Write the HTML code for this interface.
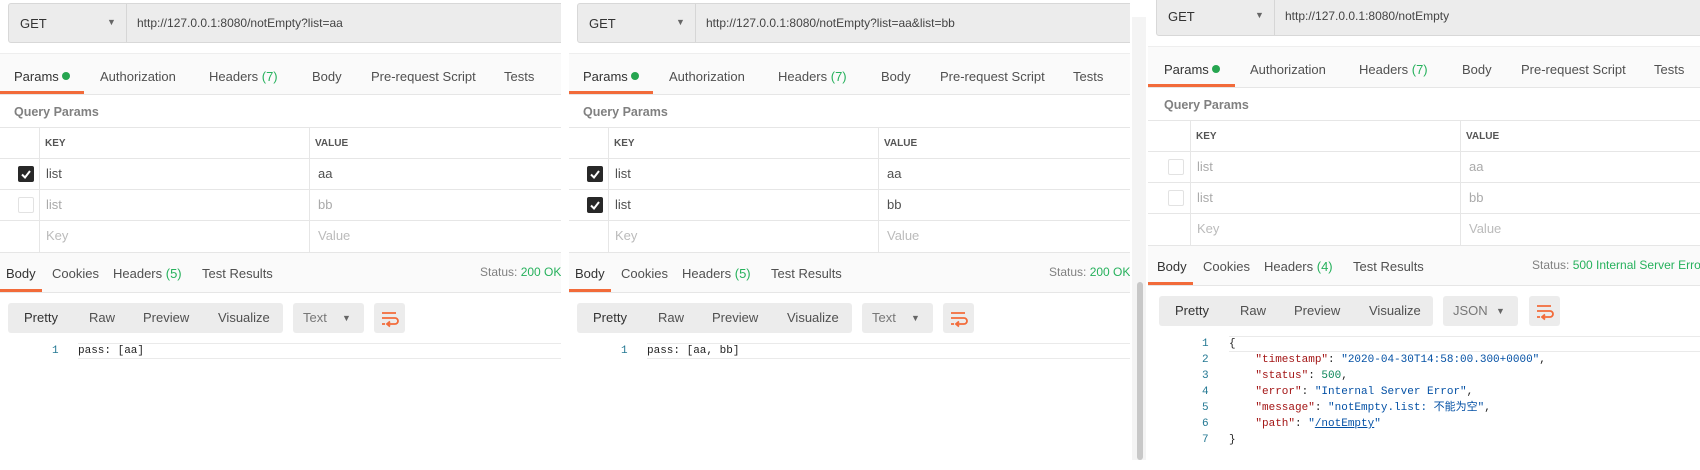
<!DOCTYPE html>
<html><head><meta charset="utf-8"><style>
*{margin:0;padding:0;box-sizing:border-box}
body{width:1700px;height:460px;overflow:hidden;background:#fff;position:relative;font-family:"Liberation Sans","Noto Sans CJK SC",sans-serif;font-size:13px;color:#505050}
.p{position:absolute;top:0;height:470px;overflow:hidden;background:#fff}
.a{position:absolute;white-space:nowrap}
.url{position:absolute;left:8px;top:3px;right:-6px;height:40px;background:#ececec;border:1px solid #d8d8d8;border-radius:3px}
.tb{position:absolute;left:0;right:0;background:#fafafa;border-bottom:1px solid #e6e6e6}
.hl{position:absolute;left:0;right:0;height:1px;background:#e6e6e6}
.vl{position:absolute;width:1px;background:#e6e6e6}
.t{position:absolute;white-space:nowrap;line-height:16px}
.g{color:#26b15c}
.ul{position:absolute;height:3px;background:#f26b3a}
.cb{position:absolute;width:16px;height:16px;border-radius:2px}
.on{background:#282828}
.off{border:1px solid #e2e2e2;background:#fff}
.box{position:absolute;background:#ececec;border-radius:3px}
.mono{font-family:"Liberation Mono","Noto Sans CJK SC",monospace;font-size:11px}
.k{color:#a31515}.s{color:#0451a5}.n{color:#098658}.ln{color:#237893}
</style></head><body>

<!-- PANEL 1 -->
<div class="p" style="left:0;width:561px">
 <div class="url"><div class="a" style="left:11px;top:12px;color:#333">GET</div><div class="a" style="left:98px;top:13px;font-size:9px;color:#666">▼</div><div class="a" style="left:117px;top:0;width:1px;height:38px;background:#d6d6d6"></div><div class="a" style="left:128px;top:12px;font-size:12px;color:#444">http://127.0.0.1:8080/notEmpty?list=aa</div></div>
 <div class="tb" style="top:53px;height:42px;border-top:1px solid #eee"></div>
 <div class="t" style="left:14px;top:69px;color:#333">Params <span style="display:inline-block;width:8px;height:8px;border-radius:4px;background:#26a550;vertical-align:1px"></span></div>
 <div class="t" style="left:100px;top:69px">Authorization</div>
 <div class="t" style="left:209px;top:69px">Headers <span class="g">(7)</span></div>
 <div class="t" style="left:312px;top:69px">Body</div>
 <div class="t" style="left:371px;top:69px">Pre-request Script</div>
 <div class="t" style="left:504px;top:69px">Tests</div>
 <div class="ul" style="left:0;width:84px;top:91px"></div>
 <div class="t" style="left:14px;top:104px;color:#808080;font-weight:bold;font-size:12.5px">Query Params</div>
 <div class="hl" style="top:127px"></div><div class="hl" style="top:158px"></div><div class="hl" style="top:189px"></div><div class="hl" style="top:220px"></div>
 <div class="vl" style="left:39px;top:127px;height:125px"></div><div class="vl" style="left:309px;top:127px;height:125px"></div>
 <div class="t" style="left:45px;top:136px;font-size:10px;font-weight:bold;color:#555">KEY</div>
 <div class="t" style="left:315px;top:136px;font-size:10px;font-weight:bold;color:#555">VALUE</div>
 <div class="cb on" style="left:18px;top:166px"><svg width="16" height="16"><path d="M4 8.5l3 3 5-6.5" stroke="#fff" stroke-width="2" fill="none"/></svg></div>
 <div class="t" style="left:46px;top:166px;color:#505050">list</div><div class="t" style="left:318px;top:166px;color:#505050">aa</div>
 <div class="cb off" style="left:18px;top:197px"></div>
 <div class="t" style="left:46px;top:197px;color:#aaa">list</div><div class="t" style="left:318px;top:197px;color:#aaa">bb</div>
 <div class="t" style="left:46px;top:228px;color:#bbb">Key</div><div class="t" style="left:318px;top:228px;color:#bbb">Value</div>
 <div class="tb" style="top:252px;height:41px;border-top:1px solid #e6e6e6"></div>
 <div class="t" style="left:6px;top:266px;color:#333">Body</div>
 <div class="t" style="left:52px;top:266px">Cookies</div>
 <div class="t" style="left:113px;top:266px">Headers <span class="g">(5)</span></div>
 <div class="t" style="left:202px;top:266px">Test Results</div>
 <div class="t" style="left:480px;top:264px;font-size:12px;color:#808080">Status: <span class="g">200 OK</span></div>
 <div class="ul" style="left:0;width:42px;top:289px"></div>
 <div class="box" style="left:8px;top:303px;width:275px;height:30px"></div>
 <div class="t" style="left:24px;top:310px;color:#333">Pretty</div><div class="t" style="left:89px;top:310px">Raw</div><div class="t" style="left:143px;top:310px">Preview</div><div class="t" style="left:218px;top:310px">Visualize</div>
 <div class="box" style="left:293px;top:303px;width:71px;height:30px"></div>
 <div class="t" style="left:303px;top:310px;color:#777">Text</div><div class="t" style="left:342px;top:310px;font-size:9px;color:#666">▼</div>
 <div class="box" style="left:374px;top:303px;width:31px;height:30px"><svg width="31" height="30"><path d="M8 10h14M8 15h13a3 3 0 0 1 0 6h-7M16 18.5l-3 2.5 3 2.5M8 21h3" stroke="#f26b3a" stroke-width="1.8" fill="none"/></svg></div>
 <div class="a" style="left:78px;top:343px;right:0;height:16px;border-top:1px solid #eaeaea;border-bottom:1px solid #eaeaea"></div>
 <div class="t mono ln" style="left:52px;top:343px">1</div>
 <div class="t mono" style="left:78px;top:343px;color:#222">pass: [aa]</div>
</div>

<!-- PANEL 2 -->
<div class="p" style="left:569px;width:561px">
 <div class="url"><div class="a" style="left:11px;top:12px;color:#333">GET</div><div class="a" style="left:98px;top:13px;font-size:9px;color:#666">▼</div><div class="a" style="left:117px;top:0;width:1px;height:38px;background:#d6d6d6"></div><div class="a" style="left:128px;top:12px;font-size:12px;color:#444">http://127.0.0.1:8080/notEmpty?list=aa&amp;list=bb</div></div>
 <div class="tb" style="top:53px;height:42px;border-top:1px solid #eee"></div>
 <div class="t" style="left:14px;top:69px;color:#333">Params <span style="display:inline-block;width:8px;height:8px;border-radius:4px;background:#26a550;vertical-align:1px"></span></div>
 <div class="t" style="left:100px;top:69px">Authorization</div>
 <div class="t" style="left:209px;top:69px">Headers <span class="g">(7)</span></div>
 <div class="t" style="left:312px;top:69px">Body</div>
 <div class="t" style="left:371px;top:69px">Pre-request Script</div>
 <div class="t" style="left:504px;top:69px">Tests</div>
 <div class="ul" style="left:0;width:84px;top:91px"></div>
 <div class="t" style="left:14px;top:104px;color:#808080;font-weight:bold;font-size:12.5px">Query Params</div>
 <div class="hl" style="top:127px"></div><div class="hl" style="top:158px"></div><div class="hl" style="top:189px"></div><div class="hl" style="top:220px"></div>
 <div class="vl" style="left:39px;top:127px;height:125px"></div><div class="vl" style="left:309px;top:127px;height:125px"></div>
 <div class="t" style="left:45px;top:136px;font-size:10px;font-weight:bold;color:#555">KEY</div>
 <div class="t" style="left:315px;top:136px;font-size:10px;font-weight:bold;color:#555">VALUE</div>
 <div class="cb on" style="left:18px;top:166px"><svg width="16" height="16"><path d="M4 8.5l3 3 5-6.5" stroke="#fff" stroke-width="2" fill="none"/></svg></div>
 <div class="t" style="left:46px;top:166px">list</div><div class="t" style="left:318px;top:166px">aa</div>
 <div class="cb on" style="left:18px;top:197px"><svg width="16" height="16"><path d="M4 8.5l3 3 5-6.5" stroke="#fff" stroke-width="2" fill="none"/></svg></div>
 <div class="t" style="left:46px;top:197px">list</div><div class="t" style="left:318px;top:197px">bb</div>
 <div class="t" style="left:46px;top:228px;color:#bbb">Key</div><div class="t" style="left:318px;top:228px;color:#bbb">Value</div>
 <div class="tb" style="top:252px;height:41px;border-top:1px solid #e6e6e6"></div>
 <div class="t" style="left:6px;top:266px;color:#333">Body</div>
 <div class="t" style="left:52px;top:266px">Cookies</div>
 <div class="t" style="left:113px;top:266px">Headers <span class="g">(5)</span></div>
 <div class="t" style="left:202px;top:266px">Test Results</div>
 <div class="t" style="left:480px;top:264px;font-size:12px;color:#808080">Status: <span class="g">200 OK</span></div>
 <div class="ul" style="left:0;width:42px;top:289px"></div>
 <div class="box" style="left:8px;top:303px;width:275px;height:30px"></div>
 <div class="t" style="left:24px;top:310px;color:#333">Pretty</div><div class="t" style="left:89px;top:310px">Raw</div><div class="t" style="left:143px;top:310px">Preview</div><div class="t" style="left:218px;top:310px">Visualize</div>
 <div class="box" style="left:293px;top:303px;width:71px;height:30px"></div>
 <div class="t" style="left:303px;top:310px;color:#777">Text</div><div class="t" style="left:342px;top:310px;font-size:9px;color:#666">▼</div>
 <div class="box" style="left:374px;top:303px;width:31px;height:30px"><svg width="31" height="30"><path d="M8 10h14M8 15h13a3 3 0 0 1 0 6h-7M16 18.5l-3 2.5 3 2.5M8 21h3" stroke="#f26b3a" stroke-width="1.8" fill="none"/></svg></div>
 <div class="a" style="left:78px;top:343px;right:0;height:16px;border-top:1px solid #eaeaea;border-bottom:1px solid #eaeaea"></div>
 <div class="t mono ln" style="left:52px;top:343px">1</div>
 <div class="t mono" style="left:78px;top:343px;color:#222">pass: [aa, bb]</div>
</div>

<!-- scrollbar -->
<div class="a" style="left:1132px;top:17px;width:14px;height:443px;background:#f4f4f4"></div>
<div class="a" style="left:1137px;top:282px;width:6px;height:178px;background:#c8c8c8;border-radius:3px"></div>

<!-- PANEL 3 -->
<div class="p" style="left:1148px;width:552px;top:-7px">
 <div class="url"><div class="a" style="left:11px;top:12px;color:#333">GET</div><div class="a" style="left:98px;top:13px;font-size:9px;color:#666">▼</div><div class="a" style="left:117px;top:0;width:1px;height:38px;background:#d6d6d6"></div><div class="a" style="left:128px;top:12px;font-size:12px;color:#444">http://127.0.0.1:8080/notEmpty</div></div>
 <div class="tb" style="top:53px;height:42px;border-top:1px solid #eee"></div>
 <div class="t" style="left:16px;top:69px;color:#333">Params <span style="display:inline-block;width:8px;height:8px;border-radius:4px;background:#26a550;vertical-align:1px"></span></div>
 <div class="t" style="left:102px;top:69px">Authorization</div>
 <div class="t" style="left:211px;top:69px">Headers <span class="g">(7)</span></div>
 <div class="t" style="left:314px;top:69px">Body</div>
 <div class="t" style="left:373px;top:69px">Pre-request Script</div>
 <div class="t" style="left:506px;top:69px">Tests</div>
 <div class="ul" style="left:0;width:87px;top:91px"></div>
 <div class="t" style="left:16px;top:104px;color:#808080;font-weight:bold;font-size:12.5px">Query Params</div>
 <div class="hl" style="top:127px"></div><div class="hl" style="top:158px"></div><div class="hl" style="top:189px"></div><div class="hl" style="top:220px"></div><div class="hl" style="top:252px"></div>
 <div class="vl" style="left:42px;top:127px;height:125px"></div><div class="vl" style="left:312px;top:127px;height:125px"></div>
 <div class="t" style="left:48px;top:136px;font-size:10px;font-weight:bold;color:#555">KEY</div>
 <div class="t" style="left:318px;top:136px;font-size:10px;font-weight:bold;color:#555">VALUE</div>
 <div class="cb off" style="left:20px;top:166px"></div>
 <div class="t" style="left:49px;top:166px;color:#aaa">list</div><div class="t" style="left:321px;top:166px;color:#aaa">aa</div>
 <div class="cb off" style="left:20px;top:197px"></div>
 <div class="t" style="left:49px;top:197px;color:#aaa">list</div><div class="t" style="left:321px;top:197px;color:#aaa">bb</div>
 <div class="t" style="left:49px;top:228px;color:#bbb">Key</div><div class="t" style="left:321px;top:228px;color:#bbb">Value</div>
 <div class="tb" style="top:252px;height:41px;border-top:1px solid #e6e6e6"></div>
 <div class="t" style="left:9px;top:266px;color:#333">Body</div>
 <div class="t" style="left:55px;top:266px">Cookies</div>
 <div class="t" style="left:116px;top:266px">Headers <span class="g">(4)</span></div>
 <div class="t" style="left:205px;top:266px">Test Results</div>
 <div class="t" style="left:384px;top:264px;font-size:12px;color:#808080">Status: <span class="g">500 Internal Server Error</span></div>
 <div class="ul" style="left:0;width:45px;top:289px"></div>
 <div class="box" style="left:11px;top:303px;width:274px;height:30px"></div>
 <div class="t" style="left:27px;top:310px;color:#333">Pretty</div><div class="t" style="left:92px;top:310px">Raw</div><div class="t" style="left:146px;top:310px">Preview</div><div class="t" style="left:221px;top:310px">Visualize</div>
 <div class="box" style="left:295px;top:303px;width:75px;height:30px"></div>
 <div class="t" style="left:305px;top:310px;color:#777">JSON</div><div class="t" style="left:348px;top:310px;font-size:9px;color:#666">▼</div>
 <div class="box" style="left:381px;top:303px;width:31px;height:30px"><svg width="31" height="30"><path d="M8 10h14M8 15h13a3 3 0 0 1 0 6h-7M16 18.5l-3 2.5 3 2.5M8 21h3" stroke="#f26b3a" stroke-width="1.8" fill="none"/></svg></div>
 <div class="a" style="left:81px;top:343px;right:0;height:16px;border-top:1px solid #eaeaea;border-bottom:1px solid #eaeaea"></div>
 <div class="mono" style="position:absolute;left:54px;top:343px;line-height:16px">
  <div class="ln">1</div><div class="ln">2</div><div class="ln">3</div><div class="ln">4</div><div class="ln">5</div><div class="ln">6</div><div class="ln">7</div>
 </div>
 <div class="mono" style="position:absolute;left:81px;top:343px;line-height:16px;white-space:pre;color:#222">{
    <span class="k">"timestamp"</span>: <span class="s">"2020-04-30T14:58:00.300+0000"</span>,
    <span class="k">"status"</span>: <span class="n">500</span>,
    <span class="k">"error"</span>: <span class="s">"Internal Server Error"</span>,
    <span class="k">"message"</span>: <span class="s">"notEmpty.list: 不能为空"</span>,
    <span class="k">"path"</span>: <span class="s">"<span style="text-decoration:underline">/notEmpty</span>"</span>
}</div>
</div>
</body></html>
